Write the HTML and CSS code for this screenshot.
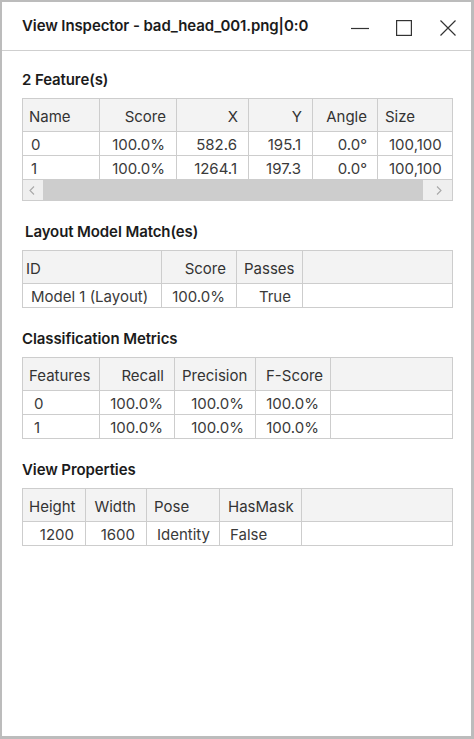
FILE: index.html
```html
<!DOCTYPE html>
<html>
<head>
<meta charset="utf-8">
<link rel="stylesheet" href="styles.css">
</head>
<body>
<div class="window">
  <div class="titlebar">
    <div class="title">View Inspector - bad_head_001.png|0:0</div>
    <div class="controls">
      <div class="ctl"><svg width="18" height="16" viewBox="0 0 18 16"><line x1="0" y1="8.5" x2="18" y2="8.5" stroke="#333" stroke-width="1.2"/></svg></div>
      <div class="ctl"><svg width="16" height="16" viewBox="0 0 16 16"><rect x="0.6" y="0.6" width="14.8" height="14.8" fill="none" stroke="#333" stroke-width="1.2"/></svg></div>
      <div class="ctl"><svg width="16" height="16" viewBox="0 0 16 16"><path d="M0.5 0.5 L15.5 15.5 M15.5 0.5 L0.5 15.5" stroke="#333" stroke-width="1.2" fill="none"/></svg></div>
    </div>
  </div>
  <div class="content">
    <section class="sec">
      <h2 class="heading">2 Feature(s)</h2>
      <div class="grid g1">
        <div class="c h l p6">Name</div>
        <div class="c h r">Score</div>
        <div class="c h r">X</div>
        <div class="c h r">Y</div>
        <div class="c h r">Angle</div>
        <div class="c h l p8">Size</div>

        <div class="c l p9">0</div>
        <div class="c r d">100.0%</div>
        <div class="c r d">582.6</div>
        <div class="c r d">195.1</div>
        <div class="c r">0.0°</div>
        <div class="c l p12 clip">100,100</div>

        <div class="c l p9">1</div>
        <div class="c r d">100.0%</div>
        <div class="c r d">1264.1</div>
        <div class="c r d">197.3</div>
        <div class="c r">0.0°</div>
        <div class="c l p12 clip">100,100</div>

        <div class="scrollbar">
          <div class="sbtn sl"><svg width="6" height="9" viewBox="0 0 6 9"><path d="M5 0.5 L1 4.5 L5 8.5" fill="none" stroke="#a8a8a8" stroke-width="1.1"/></svg></div>
          <div class="track"></div>
          <div class="sbtn sr"><svg width="6" height="9" viewBox="0 0 6 9"><path d="M1 0.5 L5 4.5 L1 8.5" fill="none" stroke="#a8a8a8" stroke-width="1.1"/></svg></div>
        </div>
      </div>
    </section>

    <section class="sec">
      <h2 class="heading shift">Layout Model Match(es)</h2>
      <div class="grid g2">
        <div class="c h l p4">ID</div>
        <div class="c h r">Score</div>
        <div class="c h l p8">Passes</div>
        <div class="c h"></div>

        <div class="c l p9">Model 1 (Layout)</div>
        <div class="c r d">100.0%</div>
        <div class="c r d">True</div>
        <div class="c"></div>
      </div>
    </section>

    <section class="sec">
      <h2 class="heading">Classification Metrics</h2>
      <div class="grid g3">
        <div class="c h l p6">Features</div>
        <div class="c h r">Recall</div>
        <div class="c h l p8">Precision</div>
        <div class="c h l p10">F-Score</div>
        <div class="c h"></div>

        <div class="c l p12">0</div>
        <div class="c r d">100.0%</div>
        <div class="c r d">100.0%</div>
        <div class="c r d">100.0%</div>
        <div class="c"></div>

        <div class="c l p12">1</div>
        <div class="c r d">100.0%</div>
        <div class="c r d">100.0%</div>
        <div class="c r d">100.0%</div>
        <div class="c"></div>
      </div>
    </section>

    <section class="sec">
      <h2 class="heading">View Properties</h2>
      <div class="grid g4">
        <div class="c h l p6">Height</div>
        <div class="c h r">Width</div>
        <div class="c h l p8">Pose</div>
        <div class="c h l p9">HasMask</div>
        <div class="c h"></div>

        <div class="c r d">1200</div>
        <div class="c r d">1600</div>
        <div class="c l p11">Identity</div>
        <div class="c l p11">False</div>
        <div class="c"></div>
      </div>
    </section>
  </div>
</div>
</body>
</html>
```

FILE: styles.css
```css
* { box-sizing: border-box; }
html, body { margin: 0; padding: 0; background: #ffffff; }
body {
  font-family: Inter, "Noto Sans", "Liberation Sans", sans-serif;
  color: #333;
}
.window {
  width: 474px;
  height: 739px;
  border-style: solid;
  border-color: #bcbcbc;
  border-width: 2px 3px 3px 2px;
  background: #fff;
  display: flex;
  flex-direction: column;
}
.titlebar {
  height: 49px;
  border-bottom: 1px solid #cfcfcf;
  display: flex;
  align-items: center;
  padding-left: 20px;
  padding-right: 1px;
}
.title {
  flex: 1;
  font-size: 15px;
  font-weight: 600;
  color: #1b1b1b;
  padding-bottom: 2px;
  letter-spacing: -0.1px;
}
.controls { display: flex; height: 100%; }
.ctl {
  width: 44px;
  display: flex;
  align-items: center;
  justify-content: center;
  padding-top: 3px;
}
.content {
  padding: 19px 19px 0 20px;
  display: flex;
  flex-direction: column;
  gap: 21px;
}
.heading {
  margin: 0 0 8px 0;
  font-size: 15px;
  font-weight: 600;
  line-height: 20px;
  color: #1b1b1b;
  letter-spacing: -0.1px;
}
.heading.shift { padding-left: 3px; }
.grid {
  display: grid;
  border-top: 1px solid #cdcdcd;
  border-left: 1px solid #cdcdcd;
  width: 431px;
}
.g1 { grid-template-columns: 77px 77px 72px 64px 65px 75px; }
.g2 { grid-template-columns: 139px 75px 66px 150px; }
.g3 { grid-template-columns: 77px 75px 81px 75px 122px; }
.g4 { grid-template-columns: 63px 61px 73px 82px 151px; }
.c {
  height: 24px;
  border-right: 1px solid #cdcdcd;
  border-bottom: 1px solid #cdcdcd;
  font-size: 15px;
  line-height: 23px;
  white-space: nowrap;
  overflow: hidden;
  color: #3a3a3a;
  padding-top: 1px;
}
.c.h {
  height: 33px;
  line-height: 32px;
  background: #f3f3f3;
  padding-top: 2px;
  color: #333;
}
.l { text-align: left; }
.r { text-align: right; padding-right: 10px; }
.r.d { padding-right: 11px; }
.p4 { padding-left: 3px; }
.p6 { padding-left: 6px; }
.p8 { padding-left: 7px; }
.p9 { padding-left: 8px; }
.p10 { padding-left: 10px; }
.p11 { padding-left: 10px; }
.p12 { padding-left: 11px; }
.clip { text-overflow: clip; }
.scrollbar {
  grid-column: 1 / -1;
  height: 21px;
  display: flex;
  border-bottom: 1px solid #cdcdcd;
  border-right: 1px solid #cdcdcd;
}
.sbtn {
  background: #efefef;
  display: flex;
  align-items: center;
  justify-content: center;
}
.sl { width: 20px; padding-right: 3px; }
.sr { width: 29px; padding-left: 2px; }
.track { flex: 1; background: #cdcdcd; }
```
